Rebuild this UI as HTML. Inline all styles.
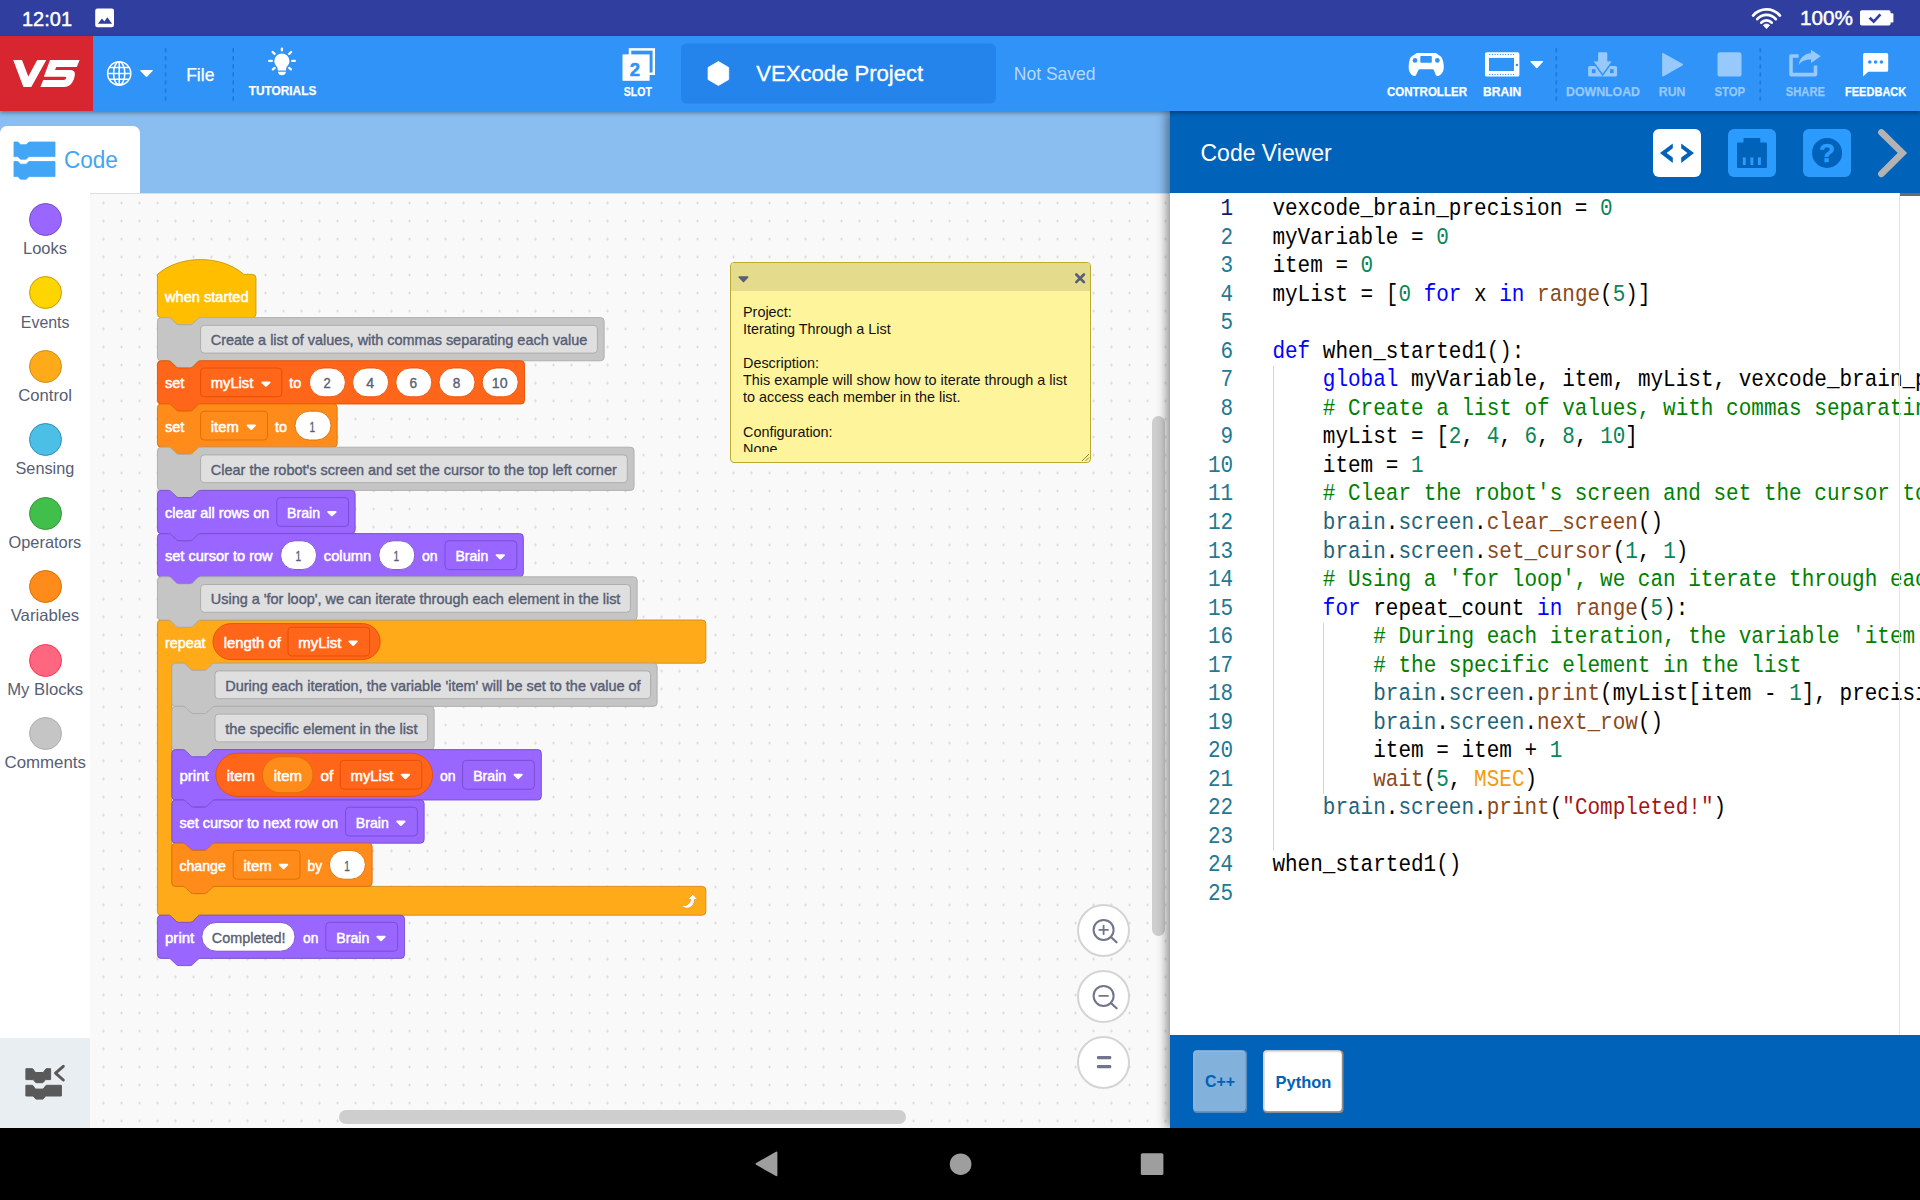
<!DOCTYPE html>
<html lang="en"><head><meta charset="utf-8"><title>VEXcode V5</title>
<style>
*{box-sizing:border-box;margin:0;padding:0}
html,body{width:1920px;height:1200px;overflow:hidden;background:#000;
 font-family:"Liberation Sans",sans-serif;}
#root{position:absolute;left:0;top:0;width:1920px;height:1200px;overflow:hidden;background:#000}
.abs{position:absolute}
svg{position:absolute;left:0;top:0;overflow:visible}
svg text{font-family:"Liberation Sans",sans-serif}

#status{left:0;top:0;width:1920px;height:36px;background:#303f9f}
#toolbar{left:0;top:36px;width:1920px;height:75px;background:#2f93f8;box-shadow:0 2px 4px rgba(0,0,0,.35);z-index:20}
#v5{left:0;top:36px;width:93px;height:75px;background:#d7262f;z-index:21}
#band{left:0;top:111px;width:1170px;height:82px;background:#8abdf0}
#codetab{left:0;top:126px;width:139.5px;height:67px;background:#fff;border-radius:7px 7px 0 0}
#sidebar{left:0;top:193px;width:90px;height:935px;background:#fff}
#sidefoot{left:0;top:1038px;width:90px;height:90px;background:#e9eef2}
#ws{left:90px;top:193px;width:1080px;height:935px;background:#f9f9f9;overflow:hidden;border-top:1px solid #dcdfe1}
#panel{left:1170px;top:111px;width:750px;height:1017px;background:#fff;box-shadow:-3px 0 10px rgba(0,0,0,.46);z-index:10}
#phead{left:0;top:0;width:750px;height:82px;background:#0062b9}
#pfoot{left:0;top:924px;width:750px;height:93px;background:#0062b9}
#nav{left:0;top:1128px;width:1920px;height:72px;background:#000;z-index:30}
.cat{position:absolute;left:0;width:90px;text-align:center;font-size:17px;color:#575e75;letter-spacing:.1px}
.dot{position:absolute;left:28.5px;width:33px;height:33px;border-radius:50%;border:1px solid}
.hsb{left:339px;top:1110px;width:567px;height:13.5px;border-radius:7px;background:#cecece}
.vsb{left:1152px;top:416px;width:13px;height:520px;border-radius:6.5px;background:#cecece}
.zb{position:absolute;left:1077.4px;width:53px;height:53px;border-radius:50%;background:#fff;border:2.4px solid #d4d4d4}
.pbtn{position:absolute;top:18px;width:48px;height:48px;border-radius:5px}

#blocks{z-index:5}
#blocks text{font-size:14.4px;fill:#fff;stroke:#fff;stroke-width:.5px}
#blocks text.d{fill:#575e75;stroke:#575e75;stroke-width:.4px}
#blocks text.n{fill:#575e75;stroke:#575e75;stroke-width:.35px}

#code{left:1170px;top:193px;width:750px;height:842px;overflow:hidden;z-index:11;background:#fff}
#cs{position:absolute;left:0;top:0;width:750px;height:842px}
#code .ln{position:absolute;left:0;width:63.2px;text-align:right;font:21px "Liberation Mono",monospace;color:#237893;top:0;height:25.22px;line-height:25.22px;white-space:pre;transform-origin:0 0}
#code .cl{position:absolute;left:102.4px;font:21px "Liberation Mono",monospace;color:#000;top:0;height:25.22px;line-height:25.22px;white-space:pre;transform-origin:0 0}
#code .k{color:#0000ff}#code .n{color:#098658}#code .c{color:#008000}#code .f{color:#8b4a1c}
#code .v{color:#1f6478}#code .s{color:#a31515}#code .e{color:#f39c12}
#code .ig{position:absolute;width:1px;background:#d3d3d3}
#note{left:730px;top:262px;width:360.5px;height:201px;background:#fef49c;border:1px solid #bcab2e;border-radius:4px;z-index:6;overflow:hidden}
#note .top{position:absolute;left:0;top:0;width:100%;height:28px;background:#e4db8c}
#note .txt{position:absolute;left:12px;top:40.6px;width:340px;height:148px;overflow:hidden;font-size:14.4px;line-height:17.15px;color:#111;white-space:pre}
#ptitle{left:1200.5px;top:139.6px;font-size:23px;color:#fff;z-index:12;white-space:pre}

#ico{z-index:40}
#ico text{fill:#fff}
#ico .lb{font-size:12px;font-weight:bold;stroke:#fff;stroke-width:.25px}
#ico .dis{fill:#98c9fc;stroke:#98c9fc}
</style></head>
<body><div id="root">
<div id="status" class="abs"></div>
<div id="toolbar" class="abs"></div>
<div id="v5" class="abs"></div>
<div id="band" class="abs"></div>
<div id="codetab" class="abs"></div>
<div id="sidebar" class="abs"></div>
<div id="sidefoot" class="abs"></div>
<div id="ws" class="abs"><svg width="1080" height="935"><defs><pattern id="grid" x="4" y="-0.5" width="18" height="18" patternUnits="userSpaceOnUse"><path d="M8 9.5h3M9.5 8v3" stroke="#dddddd" stroke-width="1" fill="none"/></pattern></defs><rect x="0" y="0" width="1080" height="935" fill="url(#grid)"/></svg></div>
<div class="dot" style="top:202.5px;background:#9966ff;border-color:#774dcb"></div>
<div class="dot" style="top:276.0px;background:#ffd500;border-color:#cc9900"></div>
<div class="dot" style="top:349.5px;background:#ffab19;border-color:#cf8b17"></div>
<div class="dot" style="top:423.0px;background:#4cbfe6;border-color:#2e8eb8"></div>
<div class="dot" style="top:496.5px;background:#40bf4a;border-color:#389438"></div>
<div class="dot" style="top:570.0px;background:#ff8c1a;border-color:#db6e00"></div>
<div class="dot" style="top:643.5px;background:#ff6680;border-color:#ff3355"></div>
<div class="dot" style="top:717.0px;background:#c5c5c5;border-color:#adadad"></div>
<div class="abs hsb"></div><div class="abs vsb"></div>
<div class="zb" style="top:903.5px"></div>
<div class="zb" style="top:969.5px"></div>
<div class="zb" style="top:1035.5px"></div>
<div id="panel" class="abs"><div id="phead" class="abs"></div><div id="pfoot" class="abs"></div></div>
<div id="nav" class="abs"></div><svg id="blocks" width="1170" height="1128" style="z-index:5"><g transform="translate(157.45,620.0) scale(0.9)"><path d="m 0,4 A 4,4 0 0,1 4,0 H 12 c 2,0 3,1 4,2 l 4,4 c 1,1 2,2 4,2 h 12 c 2,0 3,-1 4,-2 l 4,-4 c 1,-1 2,-2 4,-2 H 605.3333333333333 a 4,4 0 0,1 4,4 v 40.0 a 4,4 0 0,1 -4,4 H 64 c -2,0 -3,1 -4,2 l -4,4 c -1,1 -2,2 -4,2 h -12 c -2,0 -3,-1 -4,-2 l -4,-4 c -1,-1 -2,-2 -4,-2 h -8 a 4,4 0 0,0 -4,4 v 239.99999999999997 a 4,4 0 0,0 4,4 h 8 c 2,0 3,1 4,2 l 4,4 c 1,1 2,2 4,2 h 12 c 2,0 3,-1 4,-2 l 4,-4 c 1,-1 2,-2 4,-2 H 605.3333333333333 a 4,4 0 0,1 4,4 v 24 a 4,4 0 0,1 -4,4 H 48 c -2,0 -3,1 -4,2 l -4,4 c -1,1 -2,2 -4,2 h -12 c -2,0 -3,-1 -4,-2 l -4,-4 c -1,-1 -2,-2 -4,-2 H 4 a 4,4 0 0,1 -4,-4 z" fill="#ffab19" stroke="#cf8b17" stroke-width="1"/></g>
<g transform="translate(157.45,274.4) scale(0.9)"><path d="m 0,0 c 25,-22 71,-22 96,0 H 105.44444444444441 a 4,4 0 0,1 4,4 v 40.0 a 4,4 0 0,1 -4,4 H 48 c -2,0 -3,1 -4,2 l -4,4 c -1,1 -2,2 -4,2 h -12 c -2,0 -3,-1 -4,-2 l -4,-4 c -1,-1 -2,-2 -4,-2 H 4 a 4,4 0 0,1 -4,-4 z" fill="#ffbf00" stroke="#cc9900" stroke-width="1"/></g>
<text x="165" y="301.9" textLength="83.60" lengthAdjust="spacingAndGlyphs">when started</text>
<g transform="translate(157.45,317.59999999999997) scale(0.9)"><path d="m 0,4 A 4,4 0 0,1 4,0 H 12 c 2,0 3,1 4,2 l 4,4 c 1,1 2,2 4,2 h 12 c 2,0 3,-1 4,-2 l 4,-4 c 1,-1 2,-2 4,-2 H 492.33333333333337 a 4,4 0 0,1 4,4 v 40.0 a 4,4 0 0,1 -4,4 H 48 c -2,0 -3,1 -4,2 l -4,4 c -1,1 -2,2 -4,2 h -12 c -2,0 -3,-1 -4,-2 l -4,-4 c -1,-1 -2,-2 -4,-2 H 4 a 4,4 0 0,1 -4,-4 z" fill="#c5c5c5" stroke="#adadad" stroke-width="1"/></g><rect x="200.6" y="325.29999999999995" width="396.80" height="27.80" rx="3.6" ry="3.6" fill="#dfdfdf" stroke="#adadad" stroke-width="1"/><text x="210.75" y="345.09999999999997" textLength="376.45" lengthAdjust="spacingAndGlyphs" class="d">Create a list of values, with commas separating each value</text>
<g transform="translate(157.45,360.79999999999995) scale(0.9)"><path d="m 0,4 A 4,4 0 0,1 4,0 H 12 c 2,0 3,1 4,2 l 4,4 c 1,1 2,2 4,2 h 12 c 2,0 3,-1 4,-2 l 4,-4 c 1,-1 2,-2 4,-2 H 403.8888888888889 a 4,4 0 0,1 4,4 v 40.0 a 4,4 0 0,1 -4,4 H 48 c -2,0 -3,1 -4,2 l -4,4 c -1,1 -2,2 -4,2 h -12 c -2,0 -3,-1 -4,-2 l -4,-4 c -1,-1 -2,-2 -4,-2 H 4 a 4,4 0 0,1 -4,-4 z" fill="#ff661a" stroke="#e64d00" stroke-width="1"/></g>
<text x="165" y="388.29999999999995" textLength="19.30" lengthAdjust="spacingAndGlyphs">set</text>
<rect x="200.6" y="368.0" width="81.20" height="28.80" rx="3.6" ry="3.6" fill="#ff661a" stroke="#e64d00" stroke-width="0.9"/><text x="210.75" y="388.29999999999995" textLength="42.55" lengthAdjust="spacingAndGlyphs">myList</text><path d="M262.09999999999997,381.4 h7.6 a0.9,0.9 0 0 1 .65,1.5 l-3.75,3.6 a1,1 0 0 1 -1.4,0 l-3.75,-3.6 a0.9,0.9 0 0 1 .65,-1.5z" fill="#fff"/>
<text x="289.3" y="388.29999999999995" textLength="12.00" lengthAdjust="spacingAndGlyphs">to</text>
<rect x="309.4" y="368.0" width="36.00" height="28.80" rx="14.4" ry="14.4" fill="#fff" stroke="#e64d00" stroke-width="0.9"/><text x="323.4" y="388.29999999999995" textLength="7.20" lengthAdjust="spacingAndGlyphs" class="n">2</text>
<rect x="352.59999999999997" y="368.0" width="36.00" height="28.80" rx="14.4" ry="14.4" fill="#fff" stroke="#e64d00" stroke-width="0.9"/><text x="366.3" y="388.29999999999995" textLength="7.90" lengthAdjust="spacingAndGlyphs" class="n">4</text>
<rect x="395.79999999999995" y="368.0" width="36.00" height="28.80" rx="14.4" ry="14.4" fill="#fff" stroke="#e64d00" stroke-width="0.9"/><text x="409.6" y="388.29999999999995" textLength="7.60" lengthAdjust="spacingAndGlyphs" class="n">6</text>
<rect x="439.0" y="368.0" width="36.00" height="28.80" rx="14.4" ry="14.4" fill="#fff" stroke="#e64d00" stroke-width="0.9"/><text x="452.8" y="388.29999999999995" textLength="7.60" lengthAdjust="spacingAndGlyphs" class="n">8</text>
<rect x="482.2" y="368.0" width="36.00" height="28.80" rx="14.4" ry="14.4" fill="#fff" stroke="#e64d00" stroke-width="0.9"/><text x="491.8" y="388.29999999999995" textLength="15.80" lengthAdjust="spacingAndGlyphs" class="n">10</text>
<g transform="translate(157.45,404.0) scale(0.9)"><path d="m 0,4 A 4,4 0 0,1 4,0 H 12 c 2,0 3,1 4,2 l 4,4 c 1,1 2,2 4,2 h 12 c 2,0 3,-1 4,-2 l 4,-4 c 1,-1 2,-2 4,-2 H 195.66666666666669 a 4,4 0 0,1 4,4 v 40.0 a 4,4 0 0,1 -4,4 H 48 c -2,0 -3,1 -4,2 l -4,4 c -1,1 -2,2 -4,2 h -12 c -2,0 -3,-1 -4,-2 l -4,-4 c -1,-1 -2,-2 -4,-2 H 4 a 4,4 0 0,1 -4,-4 z" fill="#ff8c1a" stroke="#db6e00" stroke-width="1"/></g>
<text x="165" y="431.5" textLength="19.30" lengthAdjust="spacingAndGlyphs">set</text>
<rect x="200.6" y="411.20000000000005" width="66.90" height="28.80" rx="3.6" ry="3.6" fill="#ff8c1a" stroke="#db6e00" stroke-width="0.9"/><text x="210.75" y="431.5" textLength="28.05" lengthAdjust="spacingAndGlyphs">item</text><path d="M247.5,424.6 h7.6 a0.9,0.9 0 0 1 .65,1.5 l-3.75,3.6 a1,1 0 0 1 -1.4,0 l-3.75,-3.6 a0.9,0.9 0 0 1 .65,-1.5z" fill="#fff"/>
<text x="275" y="431.5" textLength="12.00" lengthAdjust="spacingAndGlyphs">to</text>
<rect x="295" y="411.20000000000005" width="36.00" height="28.80" rx="14.4" ry="14.4" fill="#fff" stroke="#db6e00" stroke-width="0.9"/><text x="309.6" y="431.5" textLength="5.60" lengthAdjust="spacingAndGlyphs" class="n">1</text>
<g transform="translate(157.45,447.2) scale(0.9)"><path d="m 0,4 A 4,4 0 0,1 4,0 H 12 c 2,0 3,1 4,2 l 4,4 c 1,1 2,2 4,2 h 12 c 2,0 3,-1 4,-2 l 4,-4 c 1,-1 2,-2 4,-2 H 525.5555555555555 a 4,4 0 0,1 4,4 v 40.0 a 4,4 0 0,1 -4,4 H 48 c -2,0 -3,1 -4,2 l -4,4 c -1,1 -2,2 -4,2 h -12 c -2,0 -3,-1 -4,-2 l -4,-4 c -1,-1 -2,-2 -4,-2 H 4 a 4,4 0 0,1 -4,-4 z" fill="#c5c5c5" stroke="#adadad" stroke-width="1"/></g><rect x="200.6" y="454.9" width="426.70" height="27.80" rx="3.6" ry="3.6" fill="#dfdfdf" stroke="#adadad" stroke-width="1"/><text x="210.75" y="474.7" textLength="406.05" lengthAdjust="spacingAndGlyphs" class="d">Clear the robot&#39;s screen and set the cursor to the top left corner</text>
<g transform="translate(157.45,490.4) scale(0.9)"><path d="m 0,4 A 4,4 0 0,1 4,0 H 12 c 2,0 3,1 4,2 l 4,4 c 1,1 2,2 4,2 h 12 c 2,0 3,-1 4,-2 l 4,-4 c 1,-1 2,-2 4,-2 H 215.66666666666669 a 4,4 0 0,1 4,4 v 40.0 a 4,4 0 0,1 -4,4 H 48 c -2,0 -3,1 -4,2 l -4,4 c -1,1 -2,2 -4,2 h -12 c -2,0 -3,-1 -4,-2 l -4,-4 c -1,-1 -2,-2 -4,-2 H 4 a 4,4 0 0,1 -4,-4 z" fill="#9966ff" stroke="#774dcb" stroke-width="1"/></g>
<text x="165" y="517.9" textLength="104.30" lengthAdjust="spacingAndGlyphs">clear all rows on</text>
<rect x="276.8" y="497.6" width="71.70" height="28.80" rx="3.6" ry="3.6" fill="#9966ff" stroke="#774dcb" stroke-width="0.9"/><text x="287" y="517.9" textLength="33.00" lengthAdjust="spacingAndGlyphs">Brain</text><path d="M328.09999999999997,511.00000000000006 h7.6 a0.9,0.9 0 0 1 .65,1.5 l-3.75,3.6 a1,1 0 0 1 -1.4,0 l-3.75,-3.6 a0.9,0.9 0 0 1 .65,-1.5z" fill="#fff"/>
<g transform="translate(157.45,533.6) scale(0.9)"><path d="m 0,4 A 4,4 0 0,1 4,0 H 12 c 2,0 3,1 4,2 l 4,4 c 1,1 2,2 4,2 h 12 c 2,0 3,-1 4,-2 l 4,-4 c 1,-1 2,-2 4,-2 H 402.55555555555554 a 4,4 0 0,1 4,4 v 40.0 a 4,4 0 0,1 -4,4 H 48 c -2,0 -3,1 -4,2 l -4,4 c -1,1 -2,2 -4,2 h -12 c -2,0 -3,-1 -4,-2 l -4,-4 c -1,-1 -2,-2 -4,-2 H 4 a 4,4 0 0,1 -4,-4 z" fill="#9966ff" stroke="#774dcb" stroke-width="1"/></g>
<text x="165" y="561.1" textLength="107.60" lengthAdjust="spacingAndGlyphs">set cursor to row</text>
<rect x="280.6" y="540.8000000000001" width="36.00" height="28.80" rx="14.4" ry="14.4" fill="#fff" stroke="#774dcb" stroke-width="0.9"/><text x="295.4" y="561.1" textLength="5.60" lengthAdjust="spacingAndGlyphs" class="n">1</text>
<text x="323.8" y="561.1" textLength="47.50" lengthAdjust="spacingAndGlyphs">column</text>
<rect x="378.8" y="540.8000000000001" width="36.00" height="28.80" rx="14.4" ry="14.4" fill="#fff" stroke="#774dcb" stroke-width="0.9"/><text x="393.6" y="561.1" textLength="5.60" lengthAdjust="spacingAndGlyphs" class="n">1</text>
<text x="422" y="561.1" textLength="15.60" lengthAdjust="spacingAndGlyphs">on</text>
<rect x="445" y="540.8000000000001" width="71.80" height="28.80" rx="3.6" ry="3.6" fill="#9966ff" stroke="#774dcb" stroke-width="0.9"/><text x="455.5" y="561.1" textLength="32.80" lengthAdjust="spacingAndGlyphs">Brain</text><path d="M496.5,554.2 h7.6 a0.9,0.9 0 0 1 .65,1.5 l-3.75,3.6 a1,1 0 0 1 -1.4,0 l-3.75,-3.6 a0.9,0.9 0 0 1 .65,-1.5z" fill="#fff"/>
<g transform="translate(157.45,576.8) scale(0.9)"><path d="m 0,4 A 4,4 0 0,1 4,0 H 12 c 2,0 3,1 4,2 l 4,4 c 1,1 2,2 4,2 h 12 c 2,0 3,-1 4,-2 l 4,-4 c 1,-1 2,-2 4,-2 H 529.0 a 4,4 0 0,1 4,4 v 40.0 a 4,4 0 0,1 -4,4 H 48 c -2,0 -3,1 -4,2 l -4,4 c -1,1 -2,2 -4,2 h -12 c -2,0 -3,-1 -4,-2 l -4,-4 c -1,-1 -2,-2 -4,-2 H 4 a 4,4 0 0,1 -4,-4 z" fill="#c5c5c5" stroke="#adadad" stroke-width="1"/></g><rect x="200.6" y="584.5" width="429.80" height="27.80" rx="3.6" ry="3.6" fill="#dfdfdf" stroke="#adadad" stroke-width="1"/><text x="210.75" y="604.3" textLength="409.65" lengthAdjust="spacingAndGlyphs" class="d">Using a &#39;for loop&#39;, we can iterate through each element in the list</text>
<text x="165" y="647.5" textLength="40.60" lengthAdjust="spacingAndGlyphs">repeat</text>
<rect x="213" y="623.6" width="167.20" height="36.00" rx="18" ry="18" fill="#ff661a" stroke="#e64d00" stroke-width="0.9"/>
<text x="223.8" y="647.5" textLength="57.00" lengthAdjust="spacingAndGlyphs">length of</text>
<rect x="288" y="627.2" width="81.60" height="28.80" rx="3.6" ry="3.6" fill="#ff661a" stroke="#e64d00" stroke-width="0.9"/><text x="298.3" y="647.5" textLength="43.00" lengthAdjust="spacingAndGlyphs">myList</text><path d="M349.29999999999995,640.6 h7.6 a0.9,0.9 0 0 1 .65,1.5 l-3.75,3.6 a1,1 0 0 1 -1.4,0 l-3.75,-3.6 a0.9,0.9 0 0 1 .65,-1.5z" fill="#fff"/>
<g transform="translate(171.85,663.2) scale(0.9)"><path d="m 0,4 A 4,4 0 0,1 4,0 H 12 c 2,0 3,1 4,2 l 4,4 c 1,1 2,2 4,2 h 12 c 2,0 3,-1 4,-2 l 4,-4 c 1,-1 2,-2 4,-2 H 535.2222222222223 a 4,4 0 0,1 4,4 v 40.0 a 4,4 0 0,1 -4,4 H 48 c -2,0 -3,1 -4,2 l -4,4 c -1,1 -2,2 -4,2 h -12 c -2,0 -3,-1 -4,-2 l -4,-4 c -1,-1 -2,-2 -4,-2 H 4 a 4,4 0 0,1 -4,-4 z" fill="#c5c5c5" stroke="#adadad" stroke-width="1"/></g><rect x="215" y="670.9000000000001" width="435.60" height="27.80" rx="3.6" ry="3.6" fill="#dfdfdf" stroke="#adadad" stroke-width="1"/><text x="225.2" y="690.7" textLength="415.40" lengthAdjust="spacingAndGlyphs" class="d">During each iteration, the variable &#39;item&#39; will be set to the value of</text>
<g transform="translate(171.85,706.4) scale(0.9)"><path d="m 0,4 A 4,4 0 0,1 4,0 H 12 c 2,0 3,1 4,2 l 4,4 c 1,1 2,2 4,2 h 12 c 2,0 3,-1 4,-2 l 4,-4 c 1,-1 2,-2 4,-2 H 287.4444444444445 a 4,4 0 0,1 4,4 v 40.0 a 4,4 0 0,1 -4,4 H 48 c -2,0 -3,1 -4,2 l -4,4 c -1,1 -2,2 -4,2 h -12 c -2,0 -3,-1 -4,-2 l -4,-4 c -1,-1 -2,-2 -4,-2 H 4 a 4,4 0 0,1 -4,-4 z" fill="#c5c5c5" stroke="#adadad" stroke-width="1"/></g><rect x="215" y="714.1" width="212.60" height="27.80" rx="3.6" ry="3.6" fill="#dfdfdf" stroke="#adadad" stroke-width="1"/><text x="225.2" y="733.9" textLength="192.40" lengthAdjust="spacingAndGlyphs" class="d">the specific element in the list</text>
<g transform="translate(171.85,749.6) scale(0.9)"><path d="m 0,4 A 4,4 0 0,1 4,0 H 12 c 2,0 3,1 4,2 l 4,4 c 1,1 2,2 4,2 h 12 c 2,0 3,-1 4,-2 l 4,-4 c 1,-1 2,-2 4,-2 H 406.55555555555554 a 4,4 0 0,1 4,4 v 48.0 a 4,4 0 0,1 -4,4 H 48 c -2,0 -3,1 -4,2 l -4,4 c -1,1 -2,2 -4,2 h -12 c -2,0 -3,-1 -4,-2 l -4,-4 c -1,-1 -2,-2 -4,-2 H 4 a 4,4 0 0,1 -4,-4 z" fill="#9966ff" stroke="#774dcb" stroke-width="1"/></g>
<text x="179.4" y="780.7" textLength="29.40" lengthAdjust="spacingAndGlyphs">print</text>
<rect x="215.8" y="753.2" width="216.80" height="43.20" rx="21.6" ry="21.6" fill="#ff661a" stroke="#e64d00" stroke-width="0.9"/>
<text x="226.8" y="780.7" textLength="28.20" lengthAdjust="spacingAndGlyphs">item</text>
<rect x="262.4" y="756.8000000000001" width="50.60" height="36.00" rx="18" ry="18" fill="#ff8c1a" stroke="#db6e00" stroke-width="0.9"/>
<text x="273.8" y="780.7" textLength="28.20" lengthAdjust="spacingAndGlyphs">item</text>
<text x="320.5" y="780.7" textLength="12.80" lengthAdjust="spacingAndGlyphs">of</text>
<rect x="340.2" y="760.4000000000001" width="81.60" height="28.80" rx="3.6" ry="3.6" fill="#ff661a" stroke="#e64d00" stroke-width="0.9"/><text x="350.5" y="780.7" textLength="43.00" lengthAdjust="spacingAndGlyphs">myList</text><path d="M401.59999999999997,773.8000000000001 h7.6 a0.9,0.9 0 0 1 .65,1.5 l-3.75,3.6 a1,1 0 0 1 -1.4,0 l-3.75,-3.6 a0.9,0.9 0 0 1 .65,-1.5z" fill="#fff"/>
<text x="440" y="780.7" textLength="15.60" lengthAdjust="spacingAndGlyphs">on</text>
<rect x="462.6" y="760.4000000000001" width="71.80" height="28.80" rx="3.6" ry="3.6" fill="#9966ff" stroke="#774dcb" stroke-width="0.9"/><text x="473.2" y="780.7" textLength="33.00" lengthAdjust="spacingAndGlyphs">Brain</text><path d="M514.3,773.8000000000001 h7.6 a0.9,0.9 0 0 1 .65,1.5 l-3.75,3.6 a1,1 0 0 1 -1.4,0 l-3.75,-3.6 a0.9,0.9 0 0 1 .65,-1.5z" fill="#fff"/>
<g transform="translate(171.85,800.0) scale(0.9)"><path d="m 0,4 A 4,4 0 0,1 4,0 H 12 c 2,0 3,1 4,2 l 4,4 c 1,1 2,2 4,2 h 12 c 2,0 3,-1 4,-2 l 4,-4 c 1,-1 2,-2 4,-2 H 276.3333333333333 a 4,4 0 0,1 4,4 v 40.0 a 4,4 0 0,1 -4,4 H 48 c -2,0 -3,1 -4,2 l -4,4 c -1,1 -2,2 -4,2 h -12 c -2,0 -3,-1 -4,-2 l -4,-4 c -1,-1 -2,-2 -4,-2 H 4 a 4,4 0 0,1 -4,-4 z" fill="#9966ff" stroke="#774dcb" stroke-width="1"/></g>
<text x="179.4" y="827.5" textLength="158.60" lengthAdjust="spacingAndGlyphs">set cursor to next row on</text>
<rect x="345.6" y="807.2" width="71.80" height="28.80" rx="3.6" ry="3.6" fill="#9966ff" stroke="#774dcb" stroke-width="0.9"/><text x="355.8" y="827.5" textLength="33.00" lengthAdjust="spacingAndGlyphs">Brain</text><path d="M397.09999999999997,820.6 h7.6 a0.9,0.9 0 0 1 .65,1.5 l-3.75,3.6 a1,1 0 0 1 -1.4,0 l-3.75,-3.6 a0.9,0.9 0 0 1 .65,-1.5z" fill="#fff"/>
<g transform="translate(171.85,843.2) scale(0.9)"><path d="m 0,4 A 4,4 0 0,1 4,0 H 12 c 2,0 3,1 4,2 l 4,4 c 1,1 2,2 4,2 h 12 c 2,0 3,-1 4,-2 l 4,-4 c 1,-1 2,-2 4,-2 H 218.55555555555557 a 4,4 0 0,1 4,4 v 40.0 a 4,4 0 0,1 -4,4 H 48 c -2,0 -3,1 -4,2 l -4,4 c -1,1 -2,2 -4,2 h -12 c -2,0 -3,-1 -4,-2 l -4,-4 c -1,-1 -2,-2 -4,-2 H 4 a 4,4 0 0,1 -4,-4 z" fill="#ff8c1a" stroke="#db6e00" stroke-width="1"/></g>
<text x="179.4" y="870.7" textLength="46.40" lengthAdjust="spacingAndGlyphs">change</text>
<rect x="233.2" y="850.4000000000001" width="66.80" height="28.80" rx="3.6" ry="3.6" fill="#ff8c1a" stroke="#db6e00" stroke-width="0.9"/><text x="243.5" y="870.7" textLength="28.30" lengthAdjust="spacingAndGlyphs">item</text><path d="M279.7,863.8000000000001 h7.6 a0.9,0.9 0 0 1 .65,1.5 l-3.75,3.6 a1,1 0 0 1 -1.4,0 l-3.75,-3.6 a0.9,0.9 0 0 1 .65,-1.5z" fill="#fff"/>
<text x="307.5" y="870.7" textLength="14.50" lengthAdjust="spacingAndGlyphs">by</text>
<rect x="329.4" y="850.4000000000001" width="36.00" height="28.80" rx="14.4" ry="14.4" fill="#fff" stroke="#db6e00" stroke-width="0.9"/><text x="344.2" y="870.7" textLength="5.60" lengthAdjust="spacingAndGlyphs" class="n">1</text>
<path d="M692.75,894.2 L697.8,899.5 L694.5,899.5 C694.5,904.6 691,908.3 686.5,908.2 C684.3,908.1 682.6,907 681.6,905.1 C683.5,905.8 685.5,905.7 687,904.9 C689.3,903.7 690.6,901.7 690.75,899.5 L687.7,899.5z" fill="#fff" stroke="#cf8b17" stroke-width=".6" stroke-linejoin="round"/>
<g transform="translate(157.45,915.2) scale(0.9)"><path d="m 0,4 A 4,4 0 0,1 4,0 H 12 c 2,0 3,1 4,2 l 4,4 c 1,1 2,2 4,2 h 12 c 2,0 3,-1 4,-2 l 4,-4 c 1,-1 2,-2 4,-2 H 270.55555555555554 a 4,4 0 0,1 4,4 v 40.0 a 4,4 0 0,1 -4,4 H 48 c -2,0 -3,1 -4,2 l -4,4 c -1,1 -2,2 -4,2 h -12 c -2,0 -3,-1 -4,-2 l -4,-4 c -1,-1 -2,-2 -4,-2 H 4 a 4,4 0 0,1 -4,-4 z" fill="#9966ff" stroke="#774dcb" stroke-width="1"/></g>
<text x="165" y="942.7" textLength="29.30" lengthAdjust="spacingAndGlyphs">print</text>
<rect x="201.8" y="922.4000000000001" width="93.20" height="28.80" rx="14.4" ry="14.4" fill="#fff" stroke="#774dcb" stroke-width="0.9"/><text x="211.8" y="942.7" textLength="73.70" lengthAdjust="spacingAndGlyphs" class="n">Completed!</text>
<text x="303" y="942.7" textLength="15.30" lengthAdjust="spacingAndGlyphs">on</text>
<rect x="325.8" y="922.4000000000001" width="71.80" height="28.80" rx="3.6" ry="3.6" fill="#9966ff" stroke="#774dcb" stroke-width="0.9"/><text x="336.3" y="942.7" textLength="33.00" lengthAdjust="spacingAndGlyphs">Brain</text><path d="M377.2,935.8000000000001 h7.6 a0.9,0.9 0 0 1 .65,1.5 l-3.75,3.6 a1,1 0 0 1 -1.4,0 l-3.75,-3.6 a0.9,0.9 0 0 1 .65,-1.5z" fill="#fff"/></svg><div id="code" class="abs"><div id="cs">
<div class="ln" style="transform:translateY(1.80px) scaleY(1.13);color:#0b216f">1</div>
<div class="cl" style="transform:translateY(1.80px) scaleY(1.13)">vexcode_brain_precision = <span class="n">0</span></div>
<div class="ln" style="transform:translateY(30.33px) scaleY(1.13)">2</div>
<div class="cl" style="transform:translateY(30.33px) scaleY(1.13)">myVariable = <span class="n">0</span></div>
<div class="ln" style="transform:translateY(58.86px) scaleY(1.13)">3</div>
<div class="cl" style="transform:translateY(58.86px) scaleY(1.13)">item = <span class="n">0</span></div>
<div class="ln" style="transform:translateY(87.39px) scaleY(1.13)">4</div>
<div class="cl" style="transform:translateY(87.39px) scaleY(1.13)">myList = [<span class="n">0</span> <span class="k">for</span> x <span class="k">in</span> <span class="f">range</span>(<span class="n">5</span>)]</div>
<div class="ln" style="transform:translateY(115.92px) scaleY(1.13)">5</div>
<div class="ln" style="transform:translateY(144.45px) scaleY(1.13)">6</div>
<div class="cl" style="transform:translateY(144.45px) scaleY(1.13)"><span class="k">def</span> when_started1():</div>
<div class="ln" style="transform:translateY(172.98px) scaleY(1.13)">7</div>
<div class="cl" style="transform:translateY(172.98px) scaleY(1.13)">    <span class="k">global</span> myVariable, item, myList, vexcode_brain_precision</div>
<div class="ln" style="transform:translateY(201.51px) scaleY(1.13)">8</div>
<div class="cl" style="transform:translateY(201.51px) scaleY(1.13)">    <span class="c"># Create a list of values, with commas separating each value</span></div>
<div class="ln" style="transform:translateY(230.04px) scaleY(1.13)">9</div>
<div class="cl" style="transform:translateY(230.04px) scaleY(1.13)">    myList = [<span class="n">2</span>, <span class="n">4</span>, <span class="n">6</span>, <span class="n">8</span>, <span class="n">10</span>]</div>
<div class="ln" style="transform:translateY(258.57px) scaleY(1.13)">10</div>
<div class="cl" style="transform:translateY(258.57px) scaleY(1.13)">    item = <span class="n">1</span></div>
<div class="ln" style="transform:translateY(287.10px) scaleY(1.13)">11</div>
<div class="cl" style="transform:translateY(287.10px) scaleY(1.13)">    <span class="c"># Clear the robot&#x27;s screen and set the cursor to the top left corner</span></div>
<div class="ln" style="transform:translateY(315.63px) scaleY(1.13)">12</div>
<div class="cl" style="transform:translateY(315.63px) scaleY(1.13)">    <span class="v">brain</span>.<span class="v">screen</span>.<span class="f">clear_screen</span>()</div>
<div class="ln" style="transform:translateY(344.16px) scaleY(1.13)">13</div>
<div class="cl" style="transform:translateY(344.16px) scaleY(1.13)">    <span class="v">brain</span>.<span class="v">screen</span>.<span class="f">set_cursor</span>(<span class="n">1</span>, <span class="n">1</span>)</div>
<div class="ln" style="transform:translateY(372.69px) scaleY(1.13)">14</div>
<div class="cl" style="transform:translateY(372.69px) scaleY(1.13)">    <span class="c"># Using a &#x27;for loop&#x27;, we can iterate through each element in the list</span></div>
<div class="ln" style="transform:translateY(401.22px) scaleY(1.13)">15</div>
<div class="cl" style="transform:translateY(401.22px) scaleY(1.13)">    <span class="k">for</span> repeat_count <span class="k">in</span> <span class="f">range</span>(<span class="n">5</span>):</div>
<div class="ln" style="transform:translateY(429.75px) scaleY(1.13)">16</div>
<div class="cl" style="transform:translateY(429.75px) scaleY(1.13)">        <span class="c"># During each iteration, the variable &#x27;item&#x27; will be set to the value of</span></div>
<div class="ln" style="transform:translateY(458.28px) scaleY(1.13)">17</div>
<div class="cl" style="transform:translateY(458.28px) scaleY(1.13)">        <span class="c"># the specific element in the list</span></div>
<div class="ln" style="transform:translateY(486.81px) scaleY(1.13)">18</div>
<div class="cl" style="transform:translateY(486.81px) scaleY(1.13)">        <span class="v">brain</span>.<span class="v">screen</span>.<span class="f">print</span>(myList[item - <span class="n">1</span>], precision=<span class="n">6</span>)</div>
<div class="ln" style="transform:translateY(515.34px) scaleY(1.13)">19</div>
<div class="cl" style="transform:translateY(515.34px) scaleY(1.13)">        <span class="v">brain</span>.<span class="v">screen</span>.<span class="f">next_row</span>()</div>
<div class="ln" style="transform:translateY(543.87px) scaleY(1.13)">20</div>
<div class="cl" style="transform:translateY(543.87px) scaleY(1.13)">        item = item + <span class="n">1</span></div>
<div class="ln" style="transform:translateY(572.40px) scaleY(1.13)">21</div>
<div class="cl" style="transform:translateY(572.40px) scaleY(1.13)">        <span class="f">wait</span>(<span class="n">5</span>, <span class="e">MSEC</span>)</div>
<div class="ln" style="transform:translateY(600.93px) scaleY(1.13)">22</div>
<div class="cl" style="transform:translateY(600.93px) scaleY(1.13)">    <span class="v">brain</span>.<span class="v">screen</span>.<span class="f">print</span>(<span class="s">&quot;Completed!&quot;</span>)</div>
<div class="ln" style="transform:translateY(629.46px) scaleY(1.13)">23</div>
<div class="ln" style="transform:translateY(657.99px) scaleY(1.13)">24</div>
<div class="cl" style="transform:translateY(657.99px) scaleY(1.13)">when_started1()</div>
<div class="ln" style="transform:translateY(686.52px) scaleY(1.13)">25</div>
<div class="ig" style="left:102.5px;top:173.0px;height:485.0px"></div>
<div class="ig" style="left:153px;top:429.8px;height:171.2px"></div>
</div>
<div class="ig" style="left:729px;top:0;height:842px;background:#e4e4e4"></div>
<div class="abs" style="left:730px;top:0;width:20px;height:3px;background:#6b6b6b"></div>
</div>
<div id="ptitle" class="abs">Code Viewer</div>
<div id="note" class="abs"><div class="top"></div><svg width="360" height="201"><path d="M8.2,13.2 h8.6 a.8,.8 0 0 1 .6,1.3 l-4.3,4.6 a.8,.8 0 0 1 -1.2,0 l-4.3,-4.6 a.8,.8 0 0 1 .6,-1.3z" fill="#575e75"/><path d="M345.3,11.5 l7.6,7.6 m0,-7.6 l-7.6,7.6" stroke="#575e75" stroke-width="2.6" stroke-linecap="round" fill="none"/><path d="M351,198 l7,-7 M354.5,198 l3.5,-3.5" stroke="#8a8241" stroke-width="1" fill="none"/></svg><div class="txt">Project:
Iterating Through a List

Description:
This example will show how to iterate through a list
to access each member in the list.

Configuration:
None</div></div><svg id="ico" width="1920" height="1200"><text x="22" y="26" textLength="50.00" lengthAdjust="spacingAndGlyphs" style="font-size:20.5px;stroke:#fff;stroke-width:.45px">12:01</text><rect x="95.2" y="8.5" width="18.8" height="18.8" rx="2.2" fill="#fff"/><path d="M97.9,23.7 L101.9,18.4 L104.4,21.6 L107.3,17.2 L112.1,23.7z" fill="#303f9f"/><path d="M1753.07,15.52 A17.8,17.8 0 0 1 1779.93,15.52" stroke="#fff" stroke-width="2.7" fill="none" stroke-linecap="round"/><path d="M1757.22,19.13 A12.3,12.3 0 0 1 1775.78,19.13" stroke="#fff" stroke-width="2.7" fill="none" stroke-linecap="round"/><path d="M1761.29,22.67 A6.9,6.9 0 0 1 1771.71,22.67" stroke="#fff" stroke-width="2.7" fill="none" stroke-linecap="round"/><path d="M1766.5,28.8 l-3.2,-3.6 a4.6,4.6 0 0 1 6.4,0z" fill="#fff" stroke="#fff" stroke-width=".6" stroke-linejoin="round"/><text x="1800" y="24.9" textLength="53.00" lengthAdjust="spacingAndGlyphs" style="font-size:20.5px;stroke:#fff;stroke-width:.45px">100%</text><rect x="1860" y="10.3" width="30.6" height="15.3" rx="1.8" fill="#fff"/><rect x="1889" y="13.2" width="4.4" height="9.4" rx="1.2" fill="#fff"/><path d="M1869.6,17.8 L1873.7,21.6 L1880.4,14.3" stroke="#303f9f" stroke-width="2.7" fill="none"/>
<path d="M13.2,60 L22,60 L28.3,76.6 L37.2,60 L46.3,60 L31.3,87.1 L23.4,87.1z" fill="#fff"/><path d="M50,60 L79.6,60 L76.8,67 L56.3,67 L55,70 L69.5,70 Q75.6,70 74.8,75 C74,81.5 70.2,87.1 64.4,87.1 L40.4,87.1 L43.2,80 L63.4,80 Q66,80 66.3,78.1 Q66.3,76.8 64.4,76.8 L43.8,76.8z" fill="#fff"/>
<g stroke="#fff" stroke-width="1.5" fill="none"><circle cx="119.2" cy="73.4" r="11.6"/><ellipse cx="119.2" cy="73.4" rx="5.6" ry="11.6"/><path d="M119.2,61.800000000000004 V85.0 M107.60000000000001,73.4 H130.8 M109.2,67.5 H129.2 M109.2,79.30000000000001 H129.2"/></g><path d="M140.8,70.1 H152.2 Q153.39999999999998,70.1 152.6,71.1 L147.3,76.6 Q146.5,77.4 145.7,76.6 L140.4,71.1 Q139.60000000000002,70.1 140.8,70.1z" fill="#fff"/>
<path d="M165.6,48 V101" stroke="#1d79e2" stroke-width="1.6" stroke-dasharray="4.2,3.9" fill="none"/>
<text x="186.2" y="81" textLength="28.2" lengthAdjust="spacingAndGlyphs" style="font-size:18px;stroke:#fff;stroke-width:.25px">File</text>
<path d="M233.2,48 V101" stroke="#1d79e2" stroke-width="1.6" stroke-dasharray="4.2,3.9" fill="none"/>
<path d="M277.7,70.4 V68.6 C277.29999999999995,66.4 274.29999999999995,64.6 274.29999999999995,61 A7.6,7.6 0 0 1 289.5,61 C289.5,64.6 286.5,66.4 286.09999999999997,68.6 V70.4z" fill="#fff"/><path d="M277.79999999999995,71.7 H286.0 Q285.29999999999995,75.2 281.9,75.2 Q278.5,75.2 277.79999999999995,71.7z" fill="#fff"/><path d="M281.9,48.6 L281.9,50.4" stroke="#fff" stroke-width="2.3" stroke-linecap="round"/><path d="M269.2,60.9 L271.8,60.9" stroke="#fff" stroke-width="2.3" stroke-linecap="round"/><path d="M292.2,60.9 L294.8,60.9" stroke="#fff" stroke-width="2.3" stroke-linecap="round"/><path d="M272.6,52 L274.6,53.9" stroke="#fff" stroke-width="2.3" stroke-linecap="round"/><path d="M291.2,52 L289.2,53.9" stroke="#fff" stroke-width="2.3" stroke-linecap="round"/><path d="M272.9,69.4 L274.6,67.9" stroke="#fff" stroke-width="2.3" stroke-linecap="round"/><path d="M290.9,69.4 L289.2,67.9" stroke="#fff" stroke-width="2.3" stroke-linecap="round"/><text x="248.8" y="94.8" textLength="67.50" lengthAdjust="spacingAndGlyphs" class="lb">TUTORIALS</text>
<rect x="630" y="49.4" width="23.8" height="24.4" fill="none" stroke="#fff" stroke-width="2.5"/><rect x="622.5" y="54.4" width="27.1" height="26.4" fill="#fff"/><text x="629.8" y="76" style="font-size:18.5px;font-weight:bold;fill:#2f93f8;stroke:#2f93f8;stroke-width:.5px">2</text><text x="623.8" y="95.8" textLength="28.10" lengthAdjust="spacingAndGlyphs" class="lb">SLOT</text>
<rect x="681" y="43.5" width="315" height="60" rx="5.5" fill="#2484ec"/><path d="M718.4,61.5 L728.6999999999999,67.5 V79.5 L718.4,85.5 L708.1,79.5 V67.5z" fill="#fff" stroke="#fff" stroke-width=".8" stroke-linejoin="round"/><text x="756.3" y="80.8" textLength="166.90" lengthAdjust="spacingAndGlyphs" style="font-size:21.5px;stroke:#fff;stroke-width:.3px">VEXcode Project</text><text x="1013.8" y="79.8" textLength="81.80" lengthAdjust="spacingAndGlyphs" style="font-size:17.5px;fill:#b9d9fb">Not Saved</text>
<path d="M1416.8,52.9 H1436 L1441.4,57.1 C1443,60 1443.8,63.5 1443.8,67 C1443.8,72 1441,75.6 1437.5,76 L1436,75.6 L1433.9,70.2 Q1433.6,69.25 1432.6,69.25 H1419.6 Q1418.6,69.25 1418.3,70.2 L1415.9,75.6 L1414.4,76 C1411.5,75.4 1409,72.6 1408.7,68 C1408.5,64 1409.3,60 1410.8,57.1 Z" fill="#fff"/><rect x="1420.3" y="56.05" width="11.5" height="6.75" rx=".8" fill="#2f93f8"/><circle cx="1415" cy="60.4" r="2.35" fill="#2f93f8"/><circle cx="1437.35" cy="60.4" r="2.35" fill="#2f93f8"/><text x="1386.9" y="95.8" textLength="80.10" lengthAdjust="spacingAndGlyphs" class="lb">CONTROLLER</text>
<rect x="1485" y="52.3" width="34.4" height="24.3" rx="1.6" fill="#fff"/><rect x="1489" y="57.9" width="25" height="13.1" fill="#2f93f8"/><path d="M1489.2,54.6 H1514 M1489.2,74.4 H1514" stroke="#2f93f8" stroke-width="1" stroke-dasharray="1.2,1.45" fill="none"/><circle cx="1516.9" cy="65" r="1.3" fill="#2f93f8"/><text x="1483.1" y="95.8" textLength="38.20" lengthAdjust="spacingAndGlyphs" class="lb">BRAIN</text><path d="M1531,61 H1542.5 Q1543.7,61 1542.9,62 L1537.55,67.8 Q1536.75,68.60000000000001 1535.95,67.8 L1530.6,62 Q1529.8,61 1531,61z" fill="#fff"/>
<path d="M1556.3,48 V101" stroke="#1d79e2" stroke-width="1.6" stroke-dasharray="4.2,3.9" fill="none"/>
<rect x="1588.1" y="66" width="29" height="10.6" rx="1.6" fill="#98c9fc"/><path d="M1594.2,61.7 H1611.1 L1602.65,73.3z" fill="#2f93f8" stroke="#2f93f8" stroke-width="3.4" stroke-linejoin="miter"/><path d="M1598.1,53.4 a1.2,1.2 0 0 1 1.2,-1.2 h6.8 a1.2,1.2 0 0 1 1.2,1.2 V62 H1598.1z" fill="#98c9fc"/><path d="M1594.2,61.7 H1611.1 L1602.65,73.3z" fill="#98c9fc" stroke="#98c9fc" stroke-width=".6" stroke-linejoin="round"/><rect x="1591.9" y="69.2" width="3.7" height="3.9" fill="#2f93f8"/><rect x="1610" y="69.2" width="3.7" height="3.9" fill="#2f93f8"/><text x="1566" y="95.8" textLength="74.00" lengthAdjust="spacingAndGlyphs" class="lb dis">DOWNLOAD</text>
<path d="M1663.1,54 L1682,64.6 L1663.1,75.3z" fill="#98c9fc" stroke="#98c9fc" stroke-width="2" stroke-linejoin="round"/><text x="1658.8" y="95.8" textLength="26.50" lengthAdjust="spacingAndGlyphs" class="lb dis">RUN</text><rect x="1717.5" y="52.3" width="24" height="24.3" rx="2.6" fill="#98c9fc"/><text x="1714.4" y="95.8" textLength="30.60" lengthAdjust="spacingAndGlyphs" class="lb dis">STOP</text>
<path d="M1760.3,48 V101" stroke="#1d79e2" stroke-width="1.6" stroke-dasharray="4.2,3.9" fill="none"/>
<path d="M1798.6,56 H1791 V74.6 H1815.5 V65.6" fill="none" stroke="#98c9fc" stroke-width="3.6" stroke-linejoin="round"/><path d="M1811,49.8 L1820.8,56.3 L1811,63.1 V59.4 C1805.5,59.4 1801.2,61 1798.7,64.9 C1799.4,58.4 1804,53.6 1811,53.2z" fill="#98c9fc"/><text x="1785.8" y="95.8" textLength="39.20" lengthAdjust="spacingAndGlyphs" class="lb dis">SHARE</text>
<path d="M1864.7,52.9 H1886.6 a1.6,1.6 0 0 1 1.6,1.6 V70.2 a1.6,1.6 0 0 1 -1.6,1.6 H1868.3 L1863.1,76.4 V54.5 a1.6,1.6 0 0 1 1.6,-1.6z" fill="#fff"/><circle cx="1869.8" cy="62" r="1.8" fill="#2f93f8"/><circle cx="1875.6" cy="62" r="1.8" fill="#2f93f8"/><circle cx="1881.4" cy="62" r="1.8" fill="#2f93f8"/><text x="1845" y="95.8" textLength="61.30" lengthAdjust="spacingAndGlyphs" class="lb">FEEDBACK</text>
<path d="M14,142 H17.8 L20.6,144.7 H26.2 L29,142 H55 V156.6 H29 L26.2,159.2 H20.6 L17.8,156.6 H14z" fill="#42a5f5" stroke="#42a5f5" stroke-width=".8" stroke-linejoin="round"/><path d="M14,161.5 H17.8 L20.6,164.2 H26.2 L29,161.5 H55 V176.6 H29 L26.2,179.2 H20.6 L17.8,176.6 H14z" fill="#42a5f5" stroke="#42a5f5" stroke-width=".8" stroke-linejoin="round"/><text x="64" y="167.8" textLength="53.90" lengthAdjust="spacingAndGlyphs" style="font-size:23px;fill:#42a5f5">Code</text>
<text x="23" y="254.2" textLength="44.00" lengthAdjust="spacingAndGlyphs" style="font-size:16.5px;fill:#575e75">Looks</text><text x="20.8" y="327.6" textLength="48.70" lengthAdjust="spacingAndGlyphs" style="font-size:16.5px;fill:#575e75">Events</text><text x="18.3" y="401.0" textLength="53.70" lengthAdjust="spacingAndGlyphs" style="font-size:16.5px;fill:#575e75">Control</text><text x="15.5" y="474.4" textLength="58.80" lengthAdjust="spacingAndGlyphs" style="font-size:16.5px;fill:#575e75">Sensing</text><text x="8.5" y="547.8" textLength="72.80" lengthAdjust="spacingAndGlyphs" style="font-size:16.5px;fill:#575e75">Operators</text><text x="10.7" y="621.2" textLength="68.50" lengthAdjust="spacingAndGlyphs" style="font-size:16.5px;fill:#575e75">Variables</text><text x="7.2" y="694.6" textLength="76.00" lengthAdjust="spacingAndGlyphs" style="font-size:16.5px;fill:#575e75">My Blocks</text><text x="4.5" y="768.0" textLength="81.40" lengthAdjust="spacingAndGlyphs" style="font-size:16.5px;fill:#575e75">Comments</text>
<rect x="1653" y="129" width="48" height="48" rx="6" fill="#fff"/><path d="M1672.8,143.4 L1660,152.9 L1672.8,163.1 V157.4 L1666.6,152.9 L1672.8,148.2z" fill="#0062b9"/><path d="M1681.2,143.4 L1694,152.9 L1681.2,163.1 V157.4 L1687.4,152.9 L1681.2,148.2z" fill="#0062b9"/><rect x="1728" y="129" width="48" height="48" rx="6" fill="#2b9bfd"/><path d="M1738,142.4 H1743.5 V138.6 a.7,.7 0 0 1 .7,-.7 H1759.6 a.7,.7 0 0 1 .7,.7 V142.4 H1765.9 a1,1 0 0 1 1,1 V166.9 a1,1 0 0 1 -1,1 H1738 a1,1 0 0 1 -1,-1 V143.4 a1,1 0 0 1 1,-1z" fill="#0062b9"/><rect x="1742.8" y="157.4" width="3" height="7.6" fill="#2b9bfd"/><rect x="1750.4" y="157.4" width="3" height="7.6" fill="#2b9bfd"/><rect x="1757.9" y="157.4" width="3" height="7.6" fill="#2b9bfd"/><rect x="1803" y="129" width="48" height="48" rx="6" fill="#2b9bfd"/><circle cx="1827.1" cy="152.9" r="15" fill="#0062b9"/><text x="1827.1" y="162.3" text-anchor="middle" style="font-size:26.5px;font-weight:bold;fill:#2b9bfd;stroke:#2b9bfd;stroke-width:.5px">?</text><path d="M1881.4,132.4 L1902.4,152.9 L1881.4,173.8" fill="none" stroke="#b3b3b3" stroke-width="6.6" stroke-linecap="round" stroke-linejoin="miter"/>
<rect x="1193.1" y="1050.3" width="54" height="62.7" rx="4" fill="#5a89b8"/><rect x="1193.1" y="1050.3" width="52.4" height="61" rx="4" fill="#8cb6dd"/><rect x="1194.9" y="1052.1" width="50.4" height="59" rx="3" fill="#82b1dc"/><text x="1205" y="1086.8" textLength="30.00" lengthAdjust="spacingAndGlyphs" style="font-size:16.2px;font-weight:bold;fill:#0062b9">C++</text><rect x="1263.1" y="1050.3" width="80.4" height="62.7" rx="4" fill="#8e8e8e"/><rect x="1263.1" y="1050.3" width="78.6" height="60.9" rx="4" fill="#dedede"/><rect x="1265" y="1052.2" width="76.5" height="58.8" rx="3" fill="#fff"/><text x="1275.6" y="1087.8" textLength="55.70" lengthAdjust="spacingAndGlyphs" style="font-size:16.2px;font-weight:bold;fill:#0062b9">Python</text>
<circle cx="1103.6" cy="929.9" r="10" fill="none" stroke="#70758b" stroke-width="2"/><path d="M1111.2,937.3 L1116.6,942.3" stroke="#70758b" stroke-width="2.2" stroke-linecap="round"/><path d="M1099.3,929.9 H1108 M1103.6,925.6 V934.1999999999999" stroke="#70758b" stroke-width="1.8" stroke-linecap="round"/><circle cx="1103.6" cy="995.9" r="10" fill="none" stroke="#70758b" stroke-width="2"/><path d="M1111.2,1003.3 L1116.6,1008.3" stroke="#70758b" stroke-width="2.2" stroke-linecap="round"/><path d="M1099.3,995.9 H1108" stroke="#70758b" stroke-width="1.8" stroke-linecap="round"/><rect x="1096.9" y="1056" width="14.4" height="3.2" rx="1.2" fill="#70758b"/><rect x="1096.9" y="1065" width="14.4" height="3.2" rx="1.2" fill="#70758b"/>
<path d="M25.9,1068.7 H32.6 L35.5,1072.5 H43.2 L46.1,1068.7 H50.6 V1079.6 H45.6 L42.9,1082.6999999999998 H35.9 L33.2,1079.6 H25.9z" fill="#595959" stroke="#595959" stroke-width="1" stroke-linejoin="round"/><path d="M25.9,1085.3 H32.6 L35.5,1089.1 H43.2 L46.1,1085.3 H61.4 V1096 H45.6 L42.9,1099.1 H35.9 L33.2,1096 H25.9z" fill="#595959" stroke="#595959" stroke-width="1" stroke-linejoin="round"/><path d="M63.3,1066.3 L55.5,1073.1 L63.3,1080" fill="none" stroke="#595959" stroke-width="3" stroke-linecap="round" stroke-linejoin="round"/>
<path d="M756.6,1163.9 L776.4,1152.6 V1175.2z" fill="#9e9e9e" stroke="#9e9e9e" stroke-width="2" stroke-linejoin="round"/><circle cx="960.6" cy="1164.2" r="10.8" fill="#9e9e9e"/><rect x="1140.8" y="1153.2" width="22.6" height="21.8" rx="1.6" fill="#9e9e9e"/></svg>
</div></body></html>
